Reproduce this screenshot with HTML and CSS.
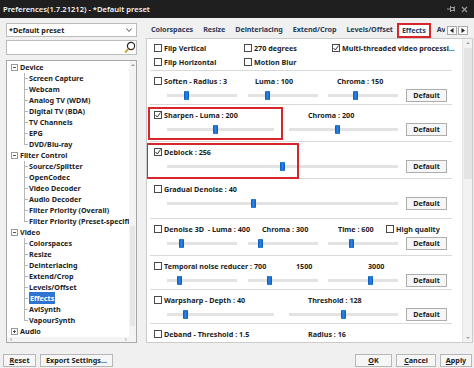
FILE: index.html
```html
<!DOCTYPE html>
<html>
<head>
    <meta charset="utf-8">
    <title>Preferences</title>
    <link rel="stylesheet" href="styles.css">
</head>
<body>
<div class="titlebar">
    <span class="title">Preferences(1.7.21212) - *Default preset</span>
    <span class="tb-icons">
        <svg width="9" height="8" viewBox="0 0 9 8"><path d="M0 4h3M3.5 1v6M3.5 2.5h3.5v3h-3.5M7.5 1.5v5" stroke="#9a9a9a" fill="none"/></svg>
        <svg width="7" height="7" viewBox="0 0 7 7"><path d="M1 1l5 5M6 1l-5 5" stroke="#9a9a9a" stroke-width="1.2"/></svg>
    </span>
</div>

<div class="main">
    <!-- left: preset + page tree -->
    <div class="side">
        <div class="combo"><span>*Default preset</span>
            <svg width="6" height="4" viewBox="0 0 6 4"><path d="M0.5 0.5l2.5 3 2.5-3" stroke="#555" fill="none"/></svg>
        </div>
        <div class="search">
            <svg width="12" height="13" viewBox="0 0 12 13"><circle cx="7" cy="5" r="3.6" stroke="#2a2a2a" stroke-width="1.2" fill="#fff"/><path d="M4.4 7.8L1 11.6" stroke="#c9a43a" stroke-width="2"/></svg>
        </div>
        <div class="tree">
            <div class="tree-body">
                <div class="tree-list">
                    <div class="row root"><span class="box"></span>Device</div>
                    <div class="kids">
                        <div class="row">Screen Capture</div>
                        <div class="row">Webcam</div>
                        <div class="row">Analog TV (WDM)</div>
                        <div class="row">Digital TV (BDA)</div>
                        <div class="row">TV Channels</div>
                        <div class="row">EPG</div>
                        <div class="row">DVD/Blu-ray</div>
                    </div>
                    <div class="row root"><span class="box"></span>Filter Control</div>
                    <div class="kids">
                        <div class="row">Source/Splitter</div>
                        <div class="row">OpenCodec</div>
                        <div class="row">Video Decoder</div>
                        <div class="row">Audio Decoder</div>
                        <div class="row">Filter Priority (Overall)</div>
                        <div class="row">Filter Priority (Preset-specific)</div>
                    </div>
                    <div class="row root"><span class="box"></span>Video</div>
                    <div class="kids">
                        <div class="row">Colorspaces</div>
                        <div class="row">Resize</div>
                        <div class="row">Deinterlacing</div>
                        <div class="row">Extend/Crop</div>
                        <div class="row">Levels/Offset</div>
                        <div class="row"><span class="sel">Effects</span></div>
                        <div class="row">AviSynth</div>
                        <div class="row">VapourSynth</div>
                    </div>
                    <div class="row root"><span class="box plus"></span>Audio</div>
                </div>
                <div class="vscroll"><span class="up"></span><span class="thumb"></span></div>
            </div>
            <div class="hscroll"><span>&#8249;</span><span>&#8250;</span></div>
        </div>
    </div>

    <!-- right: tabs + settings page -->
    <div class="settings">
        <div class="tabs">
            <div class="tab-list">
                <span class="tab">Colorspaces</span>
                <span class="tab">Resize</span>
                <span class="tab">Deinterlacing</span>
                <span class="tab">Extend/Crop</span>
                <span class="tab">Levels/Offset</span>
                <span class="tab on">Effects</span>
                <span class="tab">AviSynth</span>
            </div>
            <div class="tab-arrows">
                <span><svg width="4" height="5" viewBox="0 0 4 5"><path d="M3.5 0v5L0 2.5z" fill="#222"/></svg></span>
                <span><svg width="4" height="5" viewBox="0 0 4 5"><path d="M0.5 0v5L4 2.5z" fill="#222"/></svg></span>
            </div>
        </div>

        <div class="panel">
            <div class="pane">
                <div class="grp flip">
                    <label class="ck"><span class="cb"></span>Flip Vertical</label>
                    <label class="ck"><span class="cb"></span>270 degrees</label>
                    <label class="ck"><span class="cb on"><svg width="6" height="6" viewBox="0 0 6 6"><path d="M0.5 3l1.8 2L5.5 0.5" stroke="#333" fill="none"/></svg></span>Multi-threaded video processi...</label>
                    <label class="ck"><span class="cb"></span>Flip Horizontal</label>
                    <label class="ck"><span class="cb"></span>Motion Blur</label>
                </div>

                <div class="grp short">
                    <div class="head h-soften">
                        <label class="ck"><span class="cb"></span>Soften - Radius : 3</label>
                        <span>Luma : 100</span>
                        <span>Chroma : 150</span>
                    </div>
                    <div class="body">
                        <div class="sliders">
                            <div class="sl w70"><i style="margin-left:17px"></i></div>
                            <div class="sl w70"><i style="margin-left:17px"></i></div>
                            <div class="sl w70"><i style="margin-left:25px"></i></div>
                        </div>
                        <button class="btn">Default</button>
                    </div>
                </div>

                <div class="grp">
                    <div class="mark mark-sharpen"></div>
                    <div class="head h-pair">
                        <label class="ck"><span class="cb on"><svg width="6" height="6" viewBox="0 0 6 6"><path d="M0.5 3l1.8 2L5.5 0.5" stroke="#333" fill="none"/></svg></span>Sharpen - Luma : 200</label>
                        <span>Chroma : 200</span>
                    </div>
                    <div class="body">
                        <div class="sliders">
                            <div class="sl w107"><i style="margin-left:46px"></i></div>
                            <div class="sl w109"><i style="margin-left:46px"></i></div>
                        </div>
                        <button class="btn">Default</button>
                    </div>
                </div>

                <div class="grp">
                    <div class="mark mark-deblock"></div>
                    <div class="head">
                        <label class="ck"><span class="cb on"><svg width="6" height="6" viewBox="0 0 6 6"><path d="M0.5 3l1.8 2L5.5 0.5" stroke="#333" fill="none"/></svg></span>Deblock : 256</label>
                    </div>
                    <div class="body">
                        <div class="sliders">
                            <div class="sl w231"><i style="margin-left:113px"></i></div>
                        </div>
                        <button class="btn">Default</button>
                    </div>
                </div>

                <div class="grp tall">
                    <div class="head">
                        <label class="ck"><span class="cb"></span>Gradual Denoise : 40</label>
                    </div>
                    <div class="body">
                        <div class="sliders">
                            <div class="sl w231"><i style="margin-left:84px"></i></div>
                        </div>
                        <button class="btn">Default</button>
                    </div>
                </div>

                <div class="grp">
                    <div class="head h-d3d">
                        <label class="ck"><span class="cb"></span>Denoise 3D&nbsp; - Luma : 400</label>
                        <span>Chroma : 300</span>
                        <span>Time : 600</span>
                        <label class="ck"><span class="cb"></span>High quality</label>
                    </div>
                    <div class="body">
                        <div class="sliders">
                            <div class="sl w70"><i style="margin-left:12px"></i></div>
                            <div class="sl w70"><i style="margin-left:10px"></i></div>
                            <div class="sl w70"><i style="margin-left:21px"></i></div>
                        </div>
                        <button class="btn">Default</button>
                    </div>
                </div>

                <div class="grp short">
                    <div class="head h-tnr">
                        <label class="ck"><span class="cb"></span>Temporal noise reducer : 700</label>
                        <span>1500</span>
                        <span>3000</span>
                    </div>
                    <div class="body">
                        <div class="sliders">
                            <div class="sl w70"><i style="margin-left:10px"></i></div>
                            <div class="sl w70"><i style="margin-left:19px"></i></div>
                            <div class="sl w70"><i style="margin-left:40px"></i></div>
                        </div>
                        <button class="btn">Default</button>
                    </div>
                </div>

                <div class="grp short">
                    <div class="head h-pair">
                        <label class="ck"><span class="cb"></span>Warpsharp - Depth : 40</label>
                        <span>Threshold : 128</span>
                    </div>
                    <div class="body">
                        <div class="sliders">
                            <div class="sl w107"><i style="margin-left:16px"></i></div>
                            <div class="sl w109"><i style="margin-left:52px"></i></div>
                        </div>
                        <button class="btn">Default</button>
                    </div>
                </div>

                <div class="grp">
                    <div class="head h-pair">
                        <label class="ck"><span class="cb"></span>Deband - Threshold : 1.5</label>
                        <span>Radius : 16</span>
                    </div>
                    <div class="body">
                        <div class="sliders">
                            <div class="sl w107"><i style="margin-left:30px"></i></div>
                            <div class="sl w109"><i style="margin-left:30px"></i></div>
                        </div>
                        <button class="btn">Default</button>
                    </div>
                </div>
            </div>
            <div class="vbar"><span class="up"></span><span class="thumb"></span><span class="down"></span></div>
        </div>
    </div>
</div>

<div class="footer">
    <div class="btns">
        <button class="fbtn w-reset"><u>R</u>eset</button>
        <button class="fbtn w-export">Export Settings...</button>
    </div>
    <div class="btns">
        <button class="fbtn w-ok"><u>O</u>K</button>
        <button class="fbtn w-cancel"><u>C</u>ancel</button>
        <button class="fbtn w-apply"><u>A</u>pply</button>
    </div>
</div>
</body>
</html>
```

FILE: styles.css
```css
*{box-sizing:border-box;}
body{margin:0;width:474px;height:368px;overflow:hidden;background:#f0f0f0;
    font-family:"Noto Sans","DejaVu Sans",sans-serif;font-size:7.2px;font-weight:700;color:#1c1c1c;}
button{font:inherit;color:inherit;margin:0;}

/* title bar */
.titlebar{height:18px;background:#1f1f1f;color:#f4f4f4;display:flex;align-items:center;padding:0 6px 0 3px;font-size:7.6px;font-weight:600;}
.title{flex:1;}
.tb-icons{display:flex;align-items:center;gap:5px;}

.main{display:flex;height:325px;}

/* left column */
.side{width:145px;padding:5px 8px 0 6px;display:flex;flex-direction:column;}
.combo{height:14px;background:#fff;border:1px solid #bcbcbc;display:flex;align-items:center;justify-content:space-between;padding:0 4px 0 2px;}
.search{height:15px;margin-top:3px;background:#fff;border:1px solid #bcbcbc;display:flex;align-items:center;justify-content:flex-end;}
.tree{height:283px;margin-top:5px;background:#fff;border:1px solid #a8a8a8;display:flex;flex-direction:column;}
.tree-body{flex:1;display:flex;min-height:0;}
.tree-list{flex:1;padding-top:1px;overflow:hidden;min-width:0;}
.row{height:11px;line-height:11px;white-space:nowrap;}
.root{display:flex;align-items:center;}
.box{width:7px;height:7px;margin:0 2px 0 4px;border:1px solid #9a9a9a;background:#fff;
    background-image:linear-gradient(#555,#555);background-size:3px 1px;background-position:center;background-repeat:no-repeat;}
.box.plus{background-image:linear-gradient(#555,#555),linear-gradient(#555,#555);background-size:3px 1px,1px 3px;}
.kids{margin-left:17px;}
.kids .row{padding-left:5px;
    background-image:linear-gradient(#b5b5b5,#b5b5b5),linear-gradient(#b5b5b5,#b5b5b5);
    background-size:1px 100%,4px 1px;background-position:0 0,0 5px;background-repeat:no-repeat;}
.kids .row:last-child{background-size:1px 6px,4px 1px;}
.sel{background:#2f74d0;color:#fff;padding:1px 1px;}
.vscroll{width:7px;background:#f4f4f4;display:flex;flex-direction:column;align-items:center;}
.vscroll .up{margin-top:3px;width:0;height:0;border:2px solid transparent;border-bottom:2px solid #9a9a9a;border-top:0;}
.vscroll .thumb{margin-top:160px;width:5px;height:100px;background:#e6e6e6;}
.hscroll{height:5px;background:#f4f4f4;display:flex;justify-content:space-between;align-items:center;padding:0 9px 0 3px;color:#a0a0a0;font-size:6px;line-height:5px;}

/* right column */
.settings{width:329px;display:flex;flex-direction:column;}
.tabs{height:20px;display:flex;align-items:flex-end;}
.tab-list{width:300px;display:flex;align-items:flex-end;padding-left:6px;overflow:hidden;white-space:nowrap;}
.tab{color:#2b3c5a;line-height:11px;padding-bottom:3px;margin-right:10px;letter-spacing:-0.08px;}
.tab.on{border:2px solid #d8252c;background:#fff;padding:0 3px;height:15px;line-height:11px;margin:0 6px 0 -6px;}
.tab-arrows{display:flex;gap:1px;margin:0 0 3px 2px;}
.tab-arrows span{width:10px;height:9px;border:1px solid #a9a9a9;background:#f8f8f8;display:flex;align-items:center;justify-content:center;}

.panel{height:305px;margin:0 1px;border:1px solid #cbcbcb;background:#fff;display:flex;}
.pane{flex:1;overflow:hidden;}
.vbar{width:10px;background:#f2f2f2;border-left:1px solid #e3e3e3;display:flex;flex-direction:column;align-items:center;}
.vbar .up,.vbar .down{width:0;height:0;border:2.5px solid transparent;}
.vbar .up{margin-top:3px;border-bottom:2.5px solid #a5a5a5;border-top:0;}
.vbar .thumb{margin-top:4px;width:8px;height:131px;background:#e4e4e4;}
.vbar .down{margin-top:auto;margin-bottom:3px;border-top:2.5px solid #a5a5a5;border-bottom:0;}

/* setting groups */
.grp{position:relative;margin:0 10px 0 3px;padding:3.5px 0 0 4px;height:37px;border-bottom:1px solid #d9d9d9;}
.grp.short{height:34px;}
.grp.tall{height:40px;}
.grp.flip{height:32px;padding-top:2px;display:grid;grid-template-columns:90px 88px auto;grid-auto-rows:14px;align-items:center;}
.head{height:13px;line-height:13px;display:grid;grid-template-columns:auto;white-space:nowrap;}
.h-soften{grid-template-columns:101px 82px auto;}
.h-pair{grid-template-columns:154px auto;}
.h-d3d{grid-template-columns:108px 76px 48px auto;}
.h-tnr{grid-template-columns:142px 72px auto;}
.ck{display:flex;align-items:center;white-space:nowrap;}
.cb{width:8px;height:8px;border:1px solid #4a4a4a;background:#fff;margin-right:2px;display:flex;align-items:center;justify-content:center;flex:none;}
.body{height:16px;display:flex;align-items:center;padding-left:13px;}
.sliders{width:231px;display:flex;justify-content:space-between;}
.sl{height:10px;display:flex;align-items:center;background:linear-gradient(#e3e3e3,#e3e3e3) no-repeat 0 50%/100% 3px;}
.w70{width:70px;}
.w107{width:107px;}
.w109{width:109px;}
.w231{width:231px;}
.sl i{width:5px;height:9px;background:linear-gradient(90deg,#0b58b9,#2a84e6 50%,#0b58b9);border-radius:1px;}
.btn{margin-left:8px;width:41px;height:13px;padding:0;border:1px solid #adadad;background:#f6f6f6;line-height:11px;}
.mark{position:absolute;border:2px solid #d8252c;}
.mark-sharpen{left:-2px;top:2px;width:135px;height:33px;}
.mark-deblock{left:-4px;top:1px;width:153px;height:36px;}

/* footer */
.footer{height:25px;display:flex;justify-content:space-between;align-items:flex-end;padding:0 2px 1px 3px;}
.btns{display:flex;gap:4px;}
.fbtn{height:13px;padding:0;border:1px solid #b7b7b7;background:#f6f6f6;line-height:11px;}
.w-reset{width:33px;}
.w-export{width:73px;}
.w-ok{width:37px;}
.w-cancel{width:40px;}
.w-apply{width:32px;}
```
